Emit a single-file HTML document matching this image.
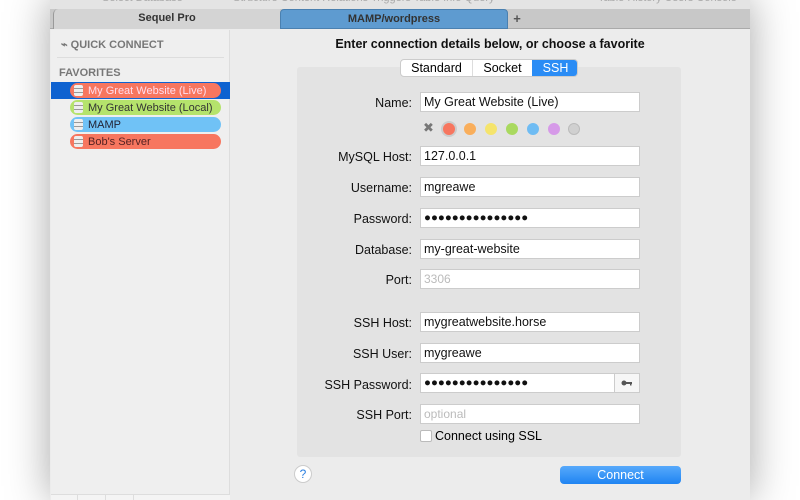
<!DOCTYPE html>
<html><head><style>
*{box-sizing:border-box;margin:0;padding:0}
html,body{width:800px;height:500px;overflow:hidden}
body{background:#fff;font-family:"Liberation Sans",sans-serif;position:relative}
.win{position:absolute;left:50px;top:-2px;width:700px;height:502px;background:#ececec;box-shadow:0 0 40px rgba(0,0,0,.35)}
.tool{position:absolute;left:50px;top:0;width:700px;height:9px;background:#e4e4e4;overflow:hidden;font-size:11px;color:#aaa}
.tabs{position:absolute;left:50px;top:9px;width:700px;height:20px;background:#c8c8c8;border-bottom:1px solid #aaa}
.tab{position:absolute;top:0;height:20px;font-size:11px;font-weight:bold;text-align:center;line-height:19px;color:#333}
.side{position:absolute;left:51px;top:30px;width:179px;height:470px;background:#efefef;border-right:1px solid #ddd}
.fav{position:absolute;left:19px;width:151px;height:15px;border-radius:8px;font-size:11px;line-height:16px;padding-left:18px}
.fav i{position:absolute;left:4px;top:2px;width:9px;height:11px;background:repeating-linear-gradient(#eee 0 3px,#999 3px 4px);border-radius:2px}
.lbl{position:absolute;width:115px;left:297px;text-align:right;font-size:12.5px;color:#111}
.fld{position:absolute;left:420px;width:220px;height:20px;background:#fff;border:1px solid #ccc;font-size:12.5px;line-height:18px;padding-left:3px;color:#111}
.pw{font-size:11.5px;letter-spacing:0;line-height:18px}
.ph{color:#bbb}
.dot{position:absolute;top:123px;width:12px;height:12px;border-radius:50%}
</style></head><body>
<div class="win"></div>
<div class="tool"><span style="position:absolute;left:52px;top:-8px">Select Database</span><span style="position:absolute;left:183px;top:-8px">Structure Content Relations Triggers Table Info Query</span><span style="position:absolute;left:548px;top:-8px">Table History Users Console</span></div>
<div class="tabs">
<div class="tab" style="left:3px;width:227px;border-left:1px solid #999;border-radius:5px 0 0 0;background:#d4d4d4">Sequel Pro</div>
<div class="tab" style="left:230px;width:228px;background:#5e9bd0;border:1px solid #4a80b0;border-radius:4px 4px 0 0">MAMP/wordpress</div>
<div class="tab" style="left:458px;width:18px;color:#555;font-size:13px">+</div>
</div>
<div class="side">
<div style="position:absolute;left:10px;top:8px;font-size:11px;font-weight:bold;color:#777">⌁ QUICK CONNECT</div>
<div style="position:absolute;left:6px;top:27px;width:167px;border-top:1px solid #ddd"></div>
<div style="position:absolute;left:8px;top:37px;font-size:11px;font-weight:bold;color:#777">FAVORITES</div>
<div style="position:absolute;left:0;top:52px;width:179px;height:17px;background:#0e62d0"></div>
<div class="fav" style="top:53px;background:#f7765f;color:#fde">My Great Website (Live)<i></i></div>
<div class="fav" style="top:70px;background:#b5e36c;color:#333">My Great Website (Local)<i></i></div>
<div class="fav" style="top:87px;background:#70c2f6;color:#223">MAMP<i></i></div>
<div class="fav" style="top:104px;background:#f7765f;color:#522">Bob's Server<i></i></div>
<div style="position:absolute;left:0;top:464px;width:179px;height:6px;border-top:1px solid #ddd;background:#f4f4f4"></div>
<div style="position:absolute;left:26px;top:464px;height:6px;border-left:1px solid #ddd"></div>
<div style="position:absolute;left:54px;top:464px;height:6px;border-left:1px solid #ddd"></div>
<div style="position:absolute;left:82px;top:464px;height:6px;border-left:1px solid #ddd"></div>
</div>
<div style="position:absolute;left:230px;top:37px;width:520px;text-align:center;font-size:12.5px;font-weight:bold;color:#111">Enter connection details below, or choose a favorite</div>
<div style="position:absolute;left:297px;top:67px;width:384px;height:390px;background:#e3e3e3;border-radius:3px"></div>
<div style="position:absolute;left:400px;top:59px;width:178px;height:18px;background:#fff;border:1px solid #ccc;border-radius:4px;font-size:12.5px;line-height:16px;overflow:hidden">
<span style="position:absolute;left:0;width:72px;text-align:center;border-right:1px solid #ddd">Standard</span>
<span style="position:absolute;left:72px;width:59px;text-align:center">Socket</span>
<span style="position:absolute;left:131px;width:47px;height:18px;text-align:center;background:#2a8cf5;color:#fff">SSH</span></div>
<div class="lbl" style="top:96px">Name:</div><div class="fld" style="top:92px">My Great Website (Live)</div>
<div style="position:absolute;left:423px;top:120px;font-size:13px;color:#777">✖</div>
<div class="dot" style="left:443px;background:#f7765f;box-shadow:0 0 0 2px #ccc"></div>
<div class="dot" style="left:464px;background:#f9ae5b"></div>
<div class="dot" style="left:485px;background:#f5e46c"></div>
<div class="dot" style="left:506px;background:#a9d95f"></div>
<div class="dot" style="left:527px;background:#6fbcf3"></div>
<div class="dot" style="left:548px;background:#d69ae8"></div>
<div class="dot" style="left:568px;background:#d0d0d0;border:1px solid #bbb"></div>
<div class="lbl" style="top:150px">MySQL Host:</div><div class="fld" style="top:146px">127.0.0.1</div>
<div class="lbl" style="top:181px">Username:</div><div class="fld" style="top:177px">mgreawe</div>
<div class="lbl" style="top:212px">Password:</div><div class="fld pw" style="top:208px">●●●●●●●●●●●●●●●</div>
<div class="lbl" style="top:243px">Database:</div><div class="fld" style="top:239px">my-great-website</div>
<div class="lbl" style="top:273px">Port:</div><div class="fld ph" style="top:269px;font-size:12px">3306</div>
<div class="lbl" style="top:316px">SSH Host:</div><div class="fld" style="top:312px">mygreatwebsite.horse</div>
<div class="lbl" style="top:347px">SSH User:</div><div class="fld" style="top:343px">mygreawe</div>
<div class="lbl" style="top:378px">SSH Password:</div><div class="fld pw" style="top:373px;width:195px">●●●●●●●●●●●●●●●</div>
<div style="position:absolute;left:614px;top:373px;width:26px;height:20px;background:#f6f6f6;border:1px solid #ccc">
<svg width="24" height="18"><circle cx="9" cy="9" r="2.5" fill="#555"/><rect x="10" y="8" width="7" height="2" fill="#555"/><rect x="15" y="9" width="1.5" height="2.5" fill="#555"/></svg></div>
<div class="lbl" style="top:408px">SSH Port:</div><div class="fld ph" style="top:404px;font-size:12px">optional</div>
<div style="position:absolute;left:420px;top:430px;width:12px;height:12px;background:#fff;border:1px solid #bbb;border-radius:2px"></div>
<div style="position:absolute;left:435px;top:429px;font-size:12.5px">Connect using SSL</div>
<div style="position:absolute;left:294px;top:465px;width:18px;height:18px;border-radius:50%;background:#fff;border:1px solid #ccc;text-align:center;font-size:12px;line-height:16px;color:#2a7ee0">?</div>
<div style="position:absolute;left:560px;top:466px;width:121px;height:18px;border-radius:4px;background:linear-gradient(#57a9fb,#1f84f2);color:#fff;text-align:center;font-size:12.5px;line-height:18px">Connect</div>
</body></html>
